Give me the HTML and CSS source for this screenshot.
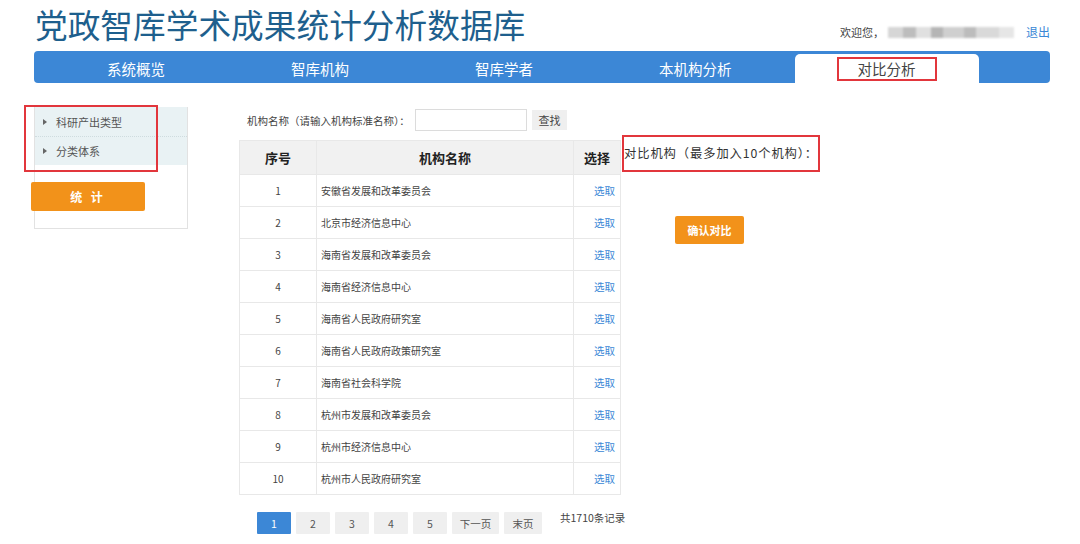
FILE: index.html
```html
<!DOCTYPE html>
<html lang="zh">
<head>
<meta charset="utf-8">
<title>党政智库学术成果统计分析数据库</title>
<link rel="stylesheet" href="styles.css">
</head>
<body>
<div class="page">
  <header class="top">
    <h1 class="title">党政智库学术成果统计分析数据库</h1>
    <div class="user">
      <span class="welcome">欢迎您，</span>
      <span class="blurname"></span>
      <a class="logout">退出</a>
    </div>
  </header>

  <nav class="nav">
    <a class="tab">系统概览</a>
    <a class="tab">智库机构</a>
    <a class="tab">智库学者</a>
    <a class="tab">本机构分析</a>
    <a class="tab active"><span class="mark">对比分析</span></a>
  </nav>

  <main class="main">
    <aside class="side">
      <ul class="tree">
        <li class="tree-item"><span class="tri"></span>科研产出类型</li>
        <li class="tree-item"><span class="tri"></span>分类体系</li>
      </ul>
      <button class="btn-orange stat">统 计</button>
      <div class="side-mark"></div>
    </aside>

    <section class="center">
      <div class="search">
        <span class="search-label">机构名称（请输入机构标准名称）：</span>
        <span class="search-input"></span>
        <button class="search-btn">查找</button>
      </div>
      <table class="list">
        <thead>
          <tr><th class="c-no">序号</th><th class="c-name">机构名称</th><th class="c-sel">选择</th></tr>
        </thead>
        <tbody>
          <tr><td class="c-no">1</td><td class="c-name">安徽省发展和改革委员会</td><td class="c-sel"><a>选取</a></td></tr>
          <tr><td class="c-no">2</td><td class="c-name">北京市经济信息中心</td><td class="c-sel"><a>选取</a></td></tr>
          <tr><td class="c-no">3</td><td class="c-name">海南省发展和改革委员会</td><td class="c-sel"><a>选取</a></td></tr>
          <tr><td class="c-no">4</td><td class="c-name">海南省经济信息中心</td><td class="c-sel"><a>选取</a></td></tr>
          <tr><td class="c-no">5</td><td class="c-name">海南省人民政府研究室</td><td class="c-sel"><a>选取</a></td></tr>
          <tr><td class="c-no">6</td><td class="c-name">海南省人民政府政策研究室</td><td class="c-sel"><a>选取</a></td></tr>
          <tr><td class="c-no">7</td><td class="c-name">海南省社会科学院</td><td class="c-sel"><a>选取</a></td></tr>
          <tr><td class="c-no">8</td><td class="c-name">杭州市发展和改革委员会</td><td class="c-sel"><a>选取</a></td></tr>
          <tr><td class="c-no">9</td><td class="c-name">杭州市经济信息中心</td><td class="c-sel"><a>选取</a></td></tr>
          <tr><td class="c-no">10</td><td class="c-name">杭州市人民政府研究室</td><td class="c-sel"><a>选取</a></td></tr>
        </tbody>
      </table>
      <div class="pager">
        <span class="pg current">1</span>
        <span class="pg">2</span>
        <span class="pg">3</span>
        <span class="pg">4</span>
        <span class="pg">5</span>
        <span class="pg wide">下一页</span>
        <span class="pg mid">末页</span>
        <span class="total">共1710条记录</span>
      </div>
    </section>

    <section class="compare">
      <div class="compare-title">对比机构（最多加入10个机构）：</div>
      <button class="btn-orange confirm">确认对比</button>
    </section>
  </main>
</div>
</body>
</html>
```

FILE: styles.css
```css
* { box-sizing: border-box; }
html, body { margin: 0; padding: 0; background: #fff; }
body {
  font-family: "Noto Sans CJK SC", "Liberation Sans", sans-serif;
  color: #444;
  width: 1080px;
  height: 544px;
  overflow: hidden;
}
a { text-decoration: none; cursor: pointer; }
button { font-family: inherit; border: 0; margin: 0; padding: 0; }

.page { padding-left: 34px; width: 1050px; }

/* header */
.top {
  height: 51px;
  display: flex;
  justify-content: space-between;
  align-items: flex-start;
}
.title {
  margin: 0 0 0 1px;
  padding-top: 5px;
  font-size: 32.7px;
  line-height: 38px;
  font-weight: 400;
  color: #1e5f8d;
  letter-spacing: 0;
}
.user {
  display: flex;
  align-items: center;
  padding-top: 25px;
  font-size: 11px;
  line-height: 14px;
  color: #444;
}
.welcome { margin-right: 4px; }
.blurname {
  display: inline-block;
  width: 126px;
  height: 11px;
  background: linear-gradient(90deg, #d6d6d6 0 12%, #bdbdbd 12% 22%, #e0e0e0 22% 34%, #b5b5b5 34% 44%, #cfcfcf 44% 60%, #bcbcbc 60% 70%, #d9d9d9 70% 88%, #e6e6e6 88% 100%);
  filter: blur(0.8px);
}
.logout { margin-left: 12px; color: #3a88d6; font-size: 12px; }

/* nav */
.nav {
  height: 32px;
  background: #3c87d6;
  border-radius: 4px;
  display: flex;
  align-items: flex-end;
  padding-left: 10px;
}
.tab {
  height: 29px;
  padding: 0 63px;
  font-size: 14.5px;
  line-height: 29px;
  color: #fff;
  white-space: nowrap;
  display: flex;
  align-items: center;
  justify-content: center;
}
.tab.active {
  background: #fff;
  color: #444;
  border-radius: 5px 5px 0 0;
  padding: 0 42px;
}
.mark {
  display: inline-block;
  border: 2px solid #e2363c;
  padding: 0 19px;
  line-height: 20px;
}

/* main */
.main {
  display: flex;
  align-items: flex-start;
}

/* sidebar */
.side {
  position: relative;
  width: 154px;
  margin-top: 24px;
  height: 122px;
  border: 1px solid #e2e2e2;
  border-top: 0;
}
.tree {
  list-style: none;
  margin: 0;
  padding: 0;
  background: #e9f2f4;
}
.tree-item {
  height: 29px;
  display: flex;
  align-items: center;
  padding-left: 8px;
  font-size: 11px;
  color: #555;
}
.tree-item + .tree-item { border-top: 1px dotted #cfdcdf; }
.tri {
  width: 0;
  height: 0;
  border-left: 4px solid #666;
  border-top: 3.5px solid transparent;
  border-bottom: 3.5px solid transparent;
  margin-right: 9px;
}
.btn-orange {
  background: #f2921a;
  color: #fff;
  font-weight: 700;
  border-radius: 2px;
}
.stat {
  display: block;
  margin: 17px 0 0 -4px;
  width: 114px;
  height: 29px;
  font-size: 12px;
  letter-spacing: 3px;
}
.side-mark {
  position: absolute;
  left: -11px;
  top: -2px;
  width: 134px;
  height: 67px;
  border: 2px solid #e2363c;
}

/* center */
.center {
  margin-left: 51px;
  width: 381px;
  margin-top: 26px;
}
.search {
  display: flex;
  align-items: center;
  height: 22px;
  padding-left: 8px;
}
.search-label { font-size: 10.5px; color: #444; width: 168px; white-space: nowrap; }
.search-input {
  width: 112px;
  height: 22px;
  border: 1px solid #dcdcdc;
  background: #fff;
}
.search-btn {
  margin-left: 5px;
  width: 35px;
  height: 20px;
  background: #efefef;
  font-size: 11px;
  color: #444;
}

.list {
  margin-top: 9px;
  width: 381px;
  border-collapse: collapse;
  table-layout: fixed;
}
.list th, .list td { border: 1px solid #e8e8e8; padding: 0; }
.list th {
  height: 34px;
  background: #f1f1f1;
  font-size: 13px;
  font-weight: 700;
  color: #222;
}
.list td { height: 32px; font-size: 10px; color: #444; }
.c-no { width: 77px; text-align: center; }
.c-name { width: 257px; }
td.c-name { padding-left: 4px; }
.c-sel { width: 47px; text-align: center; }
td.c-sel { text-align: right; padding-right: 5px; }
.c-sel a { color: #3a88d6; font-size: 10.5px; }

.pager {
  display: flex;
  align-items: flex-start;
  gap: 5px;
  margin-top: 17px;
  padding-left: 18px;
  white-space: nowrap;
}
.pg {
  width: 34px;
  height: 22px;
  background: #efefef;
  font-size: 10.5px;
  color: #555;
  display: flex;
  align-items: center;
  justify-content: center;
  border-radius: 1px;
  flex: none;
}
.pg.current { background: #3c87d6; color: #fff; }
.pg.wide { width: 47px; }
.pg.mid { width: 38px; }
.total {
  margin-left: 13px;
  font-size: 10.5px;
  color: #444;
  line-height: 12px;
  white-space: nowrap;
  flex: none;
}

/* compare */
.compare {
  margin-left: 2px;
  margin-top: 52px;
}
.compare-title {
  width: 198px;
  height: 37px;
  border: 2px solid #e2363c;
  font-size: 12.3px;
  letter-spacing: 0.9px;
  line-height: 33px;
  color: #333;
  white-space: nowrap;
  padding-left: 0;
}
.confirm {
  display: block;
  margin: 44px 0 0 53px;
  width: 69px;
  height: 28px;
  font-size: 11px;
}
```
